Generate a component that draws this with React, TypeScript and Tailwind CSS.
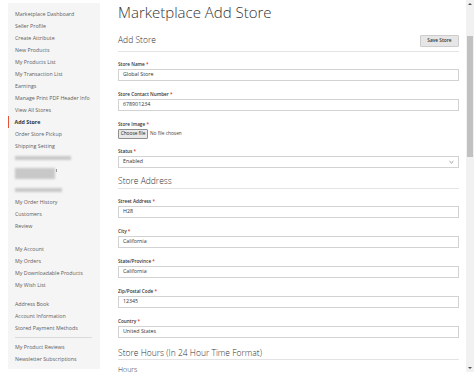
import React from "react";

type NavItem =
  | { kind: "link"; label: string; active?: boolean }
  | { kind: "blur"; w: number; h: number; tall?: boolean }
  | { kind: "gap"; h: number }
  | { kind: "line" };

const nav: NavItem[] = [
  { kind: "link", label: "Marketplace Dashboard" },
  { kind: "link", label: "Seller Profile" },
  { kind: "link", label: "Create Attribute" },
  { kind: "link", label: "New Products" },
  { kind: "link", label: "My Products List" },
  { kind: "link", label: "My Transaction List" },
  { kind: "link", label: "Earnings" },
  { kind: "link", label: "Manage Print PDF Header Info" },
  { kind: "link", label: "View All Stores" },
  { kind: "link", label: "Add Store", active: true },
  { kind: "link", label: "Order Store Pickup" },
  { kind: "link", label: "Shipping Setting" },
  { kind: "blur", w: 56, h: 4 },
  { kind: "blur", w: 40, h: 11, tall: true },
  { kind: "blur", w: 47, h: 4 },
  { kind: "link", label: "My Order History" },
  { kind: "link", label: "Customers" },
  { kind: "link", label: "Review" },
  { kind: "gap", h: 11 },
  { kind: "link", label: "My Account" },
  { kind: "link", label: "My Orders" },
  { kind: "link", label: "My Downloadable Products" },
  { kind: "link", label: "My Wish List" },
  { kind: "gap", h: 7 },
  { kind: "link", label: "Address Book" },
  { kind: "link", label: "Account Information" },
  { kind: "link", label: "Stored Payment Methods" },
  { kind: "line" },
  { kind: "link", label: "My Product Reviews" },
  { kind: "link", label: "Newsletter Subscriptions" },
];

function Sidebar() {
  return (
    <div className="ml-[8px] mt-[3px] w-[92px] h-[366px] shrink-0 bg-[#f5f5f5] pt-[5px] flex flex-col">
      {nav.map((item, i) => {
        if (item.kind === "link") {
          return item.active ? (
            <div
              key={i}
              className="h-[12px] leading-[12px] border-l-[1.5px] border-[#e2533a] pl-[5.5px] text-[5.3px] font-bold text-[#333] whitespace-nowrap"
            >
              {item.label}
            </div>
          ) : (
            <div
              key={i}
              className="h-[12px] leading-[12px] pl-[7px] text-[5.3px] text-[#5e5e5e] whitespace-nowrap"
            >
              {item.label}
            </div>
          );
        }
        if (item.kind === "blur") {
          return item.tall ? (
            <div key={i} className="h-[20px] pl-[7px] pt-[4px] flex items-start">
              <div className="h-[11px] w-[40px] bg-[#c8c8c8] blur-[1px]" />
              <div className="ml-[1px] mt-[1px] h-[3px] w-[1px] bg-[#999] blur-[0.5px]" />
            </div>
          ) : (
            <div key={i} className="h-[12px] pl-[7px] flex items-center">
              <div className="h-[4px] bg-[#c8c8c8] blur-[1px]" style={{ width: item.w }} />
            </div>
          );
        }
        if (item.kind === "gap") {
          return <div key={i} style={{ height: item.h }} />;
        }
        return (
          <div key={i} className="h-[7px] pt-[3px]">
            <div className="ml-[7px] mr-[8px] border-t border-[#dadada]" />
          </div>
        );
      })}
    </div>
  );
}

function Label({ text }: { text: string }) {
  return (
    <div className="h-[6px] leading-[6px] text-[4.7px] font-semibold text-[#333] whitespace-nowrap">
      {text} <span className="text-[#e02b27]">*</span>
    </div>
  );
}

function Field({ label, value, first }: { label: string; value: string; first?: boolean }) {
  return (
    <div className={first ? "mt-[9px]" : "mt-[10px]"}>
      <Label text={label} />
      <div className="mt-[2px] h-[12px] border border-[#d2d2d2] bg-white pl-[4px] flex items-center text-[5.3px] text-[#333]">
        {value}
      </div>
    </div>
  );
}

function Scrollbar() {
  return (
    <div className="ml-auto w-[8px] h-[372px] shrink-0 bg-[#f1f1f1] flex flex-col items-center">
      <div className="h-[8px] flex items-center justify-center">
        <div className="w-0 h-0 border-l-[2px] border-r-[2px] border-b-[2px] border-l-transparent border-r-transparent border-b-[#505050]" />
      </div>
      <div className="h-[28px]" />
      <div className="h-[121px] w-[6px] bg-[#c1c1c1]" />
      <div className="flex-1" />
      <div className="h-[8px] flex items-center justify-center">
        <div className="w-0 h-0 border-l-[2px] border-r-[2px] border-t-[2px] border-l-transparent border-r-transparent border-t-[#505050]" />
      </div>
    </div>
  );
}

export default function App() {
  return (
    <div className="w-[474px] h-[372px] overflow-hidden bg-white flex font-['Open_Sans',sans-serif]">
      <Sidebar />
      <div className="ml-[18px] w-[341px] shrink-0 flex flex-col">
        <h1 className="mt-[3px] h-[18px] leading-[18px] text-[15px] font-light text-[#333] whitespace-nowrap">
          Marketplace Add Store
        </h1>

        <div className="mt-[14px] pb-[4px] border-b border-[#e3e3e3] flex justify-between items-start">
          <div className="h-[12px] leading-[10px] text-[8.5px] font-light text-[#333]">Add Store</div>
          <button className="h-[12px] w-[39px] bg-[#e6e6e6] border border-[#cdcdcd] rounded-[1px] text-[4.8px] font-semibold text-[#333] flex items-center justify-center">
            Save Store
          </button>
        </div>

        <Field first label="Store Name" value="Global Store" />
        <Field label="Store Contact Number" value="678901234" />

        <div className="mt-[10px]">
          <Label text="Store Image" />
          <div className="mt-[2px] h-[10px] flex items-center">
            <div className="h-[10px] w-[30px] bg-[#e9e9e9] border border-[#8f8f8f] rounded-[1px] flex items-center justify-center text-[4.8px] text-[#222]">
              Choose file
            </div>
            <span className="ml-[2px] text-[4.8px] text-[#444]">No file chosen</span>
          </div>
        </div>

        <div className="mt-[9px]">
          <Label text="Status" />
          <div className="mt-[2px] h-[12px] border border-[#d2d2d2] bg-white pl-[4px] pr-[3px] flex items-center justify-between text-[5.3px] text-[#333]">
            <span>Enabled</span>
            <svg width="5" height="4" viewBox="0 0 5 4" className="mr-[1px]">
              <path d="M0.6 1.2 L2.5 3 L4.4 1.2" fill="none" stroke="#666" strokeWidth="0.7" />
            </svg>
          </div>
        </div>

        <div className="mt-[8px] h-[13px] pb-[3px] border-b border-[#e3e3e3]">
          <div className="leading-[10px] text-[8.5px] font-light text-[#333]">Store Address</div>
        </div>

        <Field first label="Street Address" value="H28" />
        <Field label="City" value="California" />
        <Field label="State/Province" value="California" />
        <Field label="Zip/Postal Code" value="12345" />
        <Field label="Country" value="United States" />

        <div className="mt-[10px] h-[12px] pb-[2px] border-b border-[#e3e3e3]">
          <div className="leading-[10px] text-[8.5px] font-light text-[#333] whitespace-nowrap">
            Store Hours (In 24 Hour Time Format)
          </div>
        </div>

        <div className="mt-[5px] leading-[10px] text-[7px] font-light text-[#333]">Hours</div>
      </div>
      <Scrollbar />
    </div>
  );
}
